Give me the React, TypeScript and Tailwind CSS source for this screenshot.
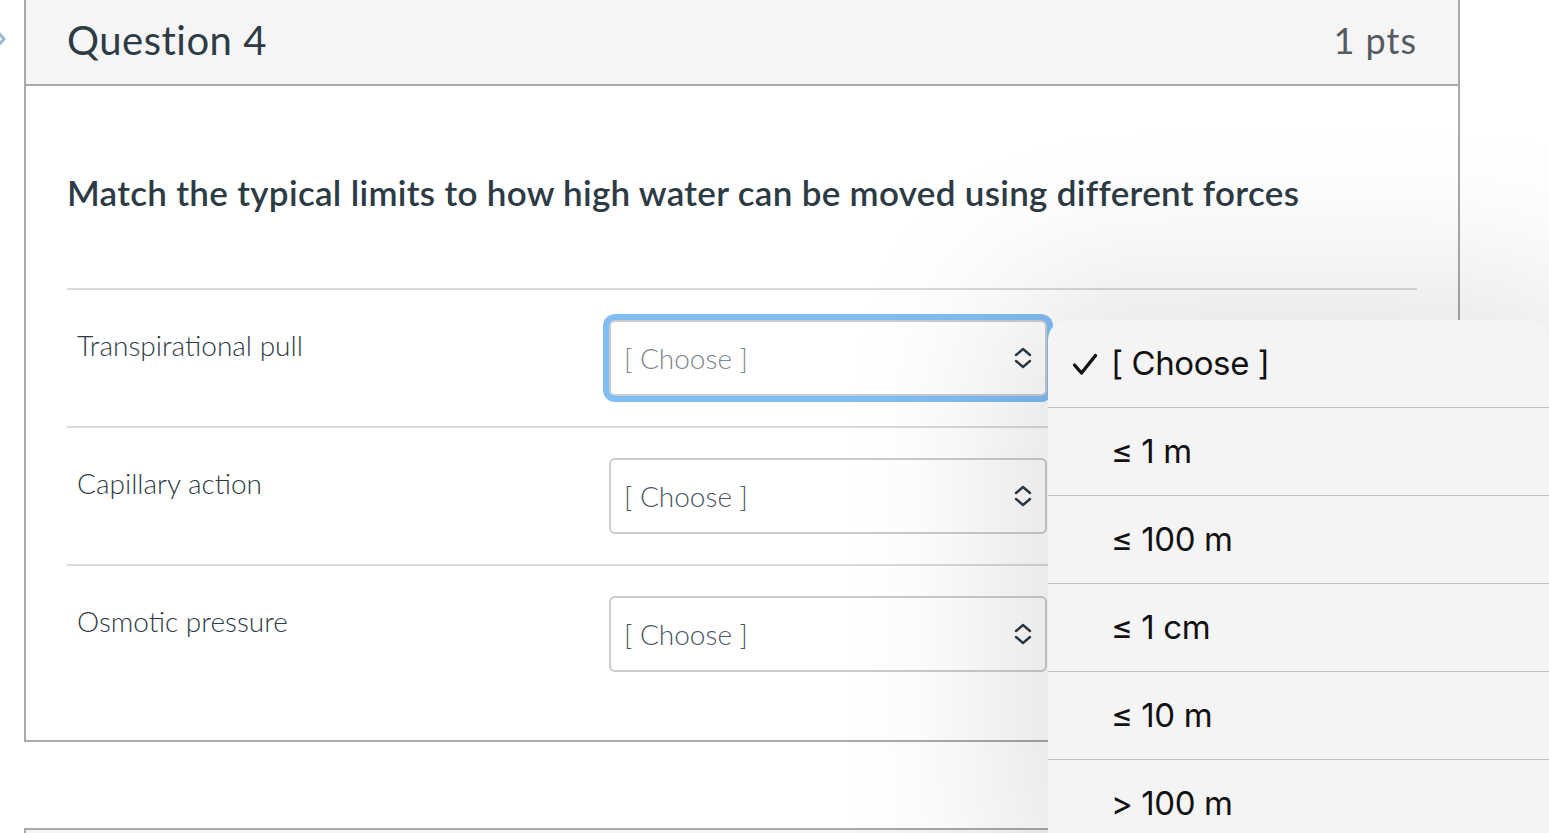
import React from 'react';

const rows = ['Transpirational pull', 'Capillary action', 'Osmotic pressure'];
const options = ['[ Choose ]', '≤ 1 m', '≤ 100 m', '≤ 1 cm', '≤ 10 m', '> 100 m'];

const UpDown = () => (
  <svg width="20" height="22" viewBox="0 0 20 22" fill="none" stroke="#2d3b45" strokeWidth="2.4" strokeLinecap="round" strokeLinejoin="round">
    <path d="M3 8 L10 2 L17 8" />
    <path d="M3 14 L10 20 L17 14" />
  </svg>
);

const Select = ({ focused }: { focused?: boolean }) => (
  <div
    className={`flex items-center justify-between w-[438px] h-[76px] rounded-[6px] border-2 border-[#c7cdd1] bg-white pl-[13px] pr-[12px] ${
      focused ? 'ring-[6px] ring-[#80bdf5]' : ''
    }`}
  >
    <span className={`text-[28px] font-light ${focused ? 'text-[#7c868d]' : 'text-[#4a5661]'}`}>[ Choose ]</span>
    <UpDown />
  </div>
);

const Dropdown = () => (
  <div className="absolute left-[1048px] top-[320px] w-[501px] rounded-t-[20px] bg-[#f4f4f4] shadow-[0_10px_170px_50px_rgba(0,0,0,0.11)] font-['Inter','Liberation_Sans',sans-serif] text-[#111]">
    {options.map((o, i) => (
      <div
        key={o}
        className={`relative h-[88px] flex items-center pl-[63px] text-[33px] ${i < options.length - 1 ? 'border-b border-[#c2c2c2]' : ''}`}
      >
        {i === 0 && (
          <svg className="absolute left-[24px] top-[33px]" width="26" height="23" viewBox="0 0 26 23" fill="none" stroke="#111" strokeWidth="3.4" strokeLinecap="round" strokeLinejoin="round">
            <path d="M2.5 12 L9.5 20 L23.5 2.5" />
          </svg>
        )}
        <span className="tracking-[-0.4px]">{o}</span>
      </div>
    ))}
  </div>
);

export default function App() {
  return (
    <div className="relative w-[1549px] h-[833px] overflow-hidden bg-white font-['Lato','Noto_Sans',sans-serif] text-[#2d3b45]">
      <svg className="absolute left-[-12px] top-[26px]" width="20" height="26" viewBox="0 0 20 26" fill="none" stroke="#9cb8d2" strokeWidth="3">
        <path d="M6 2 L16 13 L6 24" />
      </svg>

      <div className="ml-[24px] w-[1436px] border-x-2 border-b-2 border-[#a9a9a9]">
        <div className="h-[86px] bg-[#f5f5f5] border-b-2 border-[#a9a9a9] flex items-center justify-between px-[41px]">
          <span className="text-[40px] leading-none tracking-[0.5px] -mt-[4px]">Question 4</span>
          <span className="text-[36px] leading-none tracking-[1px] text-[#555b61] -mt-[4px]">1 pts</span>
        </div>
        <div className="px-[41px] pb-[38px]">
          <p className="pt-[84px] text-[35px] leading-[44px] font-semibold tracking-[0.3px]">
            Match the typical limits to how high water can be moved using different forces
          </p>
          <div className="mt-[74px]">
            {rows.map((r, i) => (
              <div key={r} className="h-[138px] border-t-2 border-[#dadada] flex items-start pt-[30px]">
                <div className="w-[542px] pl-[10px] pt-[7px] text-[28px] font-light leading-[36px]">{r}</div>
                <Select focused={i === 0} />
              </div>
            ))}
          </div>
        </div>
      </div>

      <div className="mt-[86px] ml-[24px] w-[1436px] h-[40px] border-x-2 border-t-2 border-[#a9a9a9] bg-[#f5f5f5]" />

      <Dropdown />
    </div>
  );
}
